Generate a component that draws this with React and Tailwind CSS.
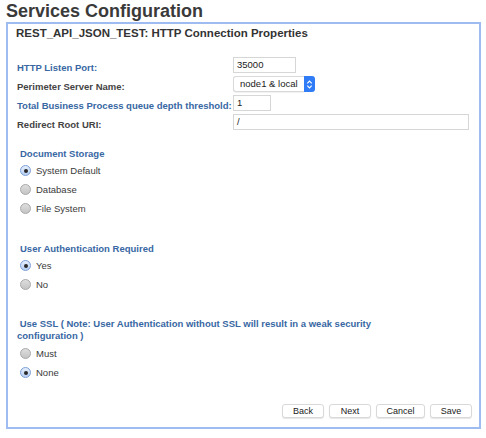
import React from "react";

function Radio({ checked, label }) {
  return (
    <div className="flex items-center h-[19px] pl-[4px]">
      {checked ? (
        <span className="w-[11px] h-[11px] rounded-full border border-[#7a9fd6] bg-gradient-to-b from-[#e6effc] to-[#b7cff2] flex items-center justify-center">
          <span className="w-[4px] h-[4px] rounded-full bg-[#2a2a2a]" />
        </span>
      ) : (
        <span className="w-[11px] h-[11px] rounded-full border border-[#a8a8a8] bg-gradient-to-b from-[#dedede] to-[#c4c4c4]" />
      )}
      <span className="ml-[5px] text-[9.5px] text-[#3a3a3a] leading-[12px]">{label}</span>
    </div>
  );
}

function Heading({ children, className = "" }) {
  return (
    <div className={"pl-[4px] text-[9.5px] font-bold text-[#3867a3] leading-[13px] " + className}>
      {children}
    </div>
  );
}

function Btn({ children, w }) {
  return (
    <button
      className={
        "h-[14px] rounded-[3px] border border-[#d9d9d9] bg-white text-[9px] leading-[12px] text-[#222] shadow-[0_1px_1px_rgba(0,0,0,0.10)] " +
        w
      }
    >
      {children}
    </button>
  );
}

export default function App() {
  return (
    <div className="w-[486px] h-[438px] bg-white font-['Liberation_Sans',Arial,sans-serif] overflow-hidden">
      <h1 className="pl-[6px] text-[18px] font-bold text-[#3a3a3a] leading-[21px] pt-[1px]">
        Services Configuration
      </h1>
      <div className="ml-[6px] w-[475px] h-[407px] border-2 border-[#9fbcf2] pl-[8px] pr-[6px]">
        <div className="text-[11.5px] font-bold text-[#333] leading-[18px] pl-[0px]">
          REST_API_JSON_TEST: HTTP Connection Properties
        </div>
        <div className="mt-[15px] pl-[1px] grid grid-cols-[216px_1fr] gap-y-[3px] items-end">
          <div className="text-[9.5px] font-bold text-[#3867a3] leading-[11px]">HTTP Listen Port:</div>
          <div className="h-[16px] w-[63px] border border-[#d6d6d6] text-[9.5px] leading-[14px] pl-[3px] text-[#222]">35000</div>

          <div className="text-[9.5px] font-bold text-[#444] leading-[11px]">Perimeter Server Name:</div>
          <div className="h-[16px] w-[82px] flex items-stretch">
            <div className="flex-1 border border-[#d9d9d9] rounded-l-[3px] border-r-0 text-[9.5px] leading-[14px] pl-[6px] text-[#222] bg-white shadow-[0_1px_1px_rgba(0,0,0,0.06)]">
              node1 &amp; local
            </div>
            <div className="w-[11px] bg-[#2f7cf6] rounded-r-[3px] flex items-center justify-center">
              <svg width="7" height="11" viewBox="0 0 7 11">
                <path d="M1.3 4.3 L3.5 2 L5.7 4.3" fill="none" stroke="white" strokeWidth="1.1" />
                <path d="M1.3 6.7 L3.5 9 L5.7 6.7" fill="none" stroke="white" strokeWidth="1.1" />
              </svg>
            </div>
          </div>

          <div className="text-[9.5px] font-bold text-[#3867a3] leading-[11px] whitespace-nowrap">
            Total Business Process queue depth threshold:
          </div>
          <div className="h-[16px] w-[38px] border border-[#d6d6d6] text-[9.5px] leading-[14px] pl-[3px] text-[#222]">1</div>

          <div className="text-[9.5px] font-bold text-[#444] leading-[11px]">Redirect Root URI:</div>
          <div className="h-[16px] w-[236px] border border-[#d6d6d6] text-[9.5px] leading-[14px] pl-[3px] text-[#222]">/</div>
        </div>

        <Heading className="mt-[17px]">Document Storage</Heading>
        <div className="mt-[1px]">
          <Radio checked label="System Default" />
          <Radio label="Database" />
          <Radio label="File System" />
        </div>

        <Heading className="mt-[24px]">User Authentication Required</Heading>
        <div className="mt-[1px]">
          <Radio checked label="Yes" />
          <Radio label="No" />
        </div>

        <div className="mt-[24px] pl-[1px] text-[9.5px] font-bold text-[#3867a3] leading-[12px]">
          &nbsp;Use SSL ( Note: User Authentication without SSL will result in a weak security
          <br />
          configuration )
        </div>
        <div className="mt-[2px]">
          <Radio label="Must" />
          <Radio checked label="None" />
        </div>

        <div className="mt-[22px] flex justify-end gap-[5px] pr-[1px]">
          <Btn w="w-[42px]">Back</Btn>
          <Btn w="w-[42px]">Next</Btn>
          <Btn w="w-[49px]">Cancel</Btn>
          <Btn w="w-[42px]">Save</Btn>
        </div>
      </div>
    </div>
  );
}
